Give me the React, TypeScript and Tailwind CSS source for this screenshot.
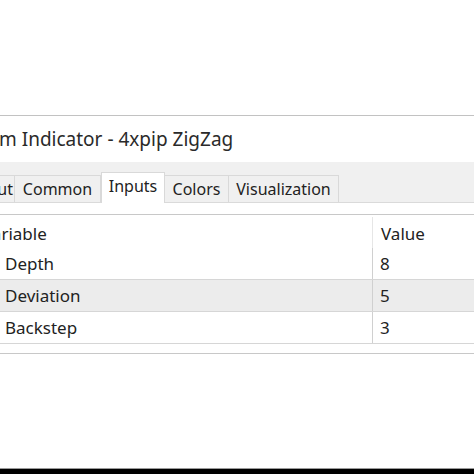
import React from "react";

const font = { fontFamily: '"Noto Sans", "Open Sans", Arial, sans-serif' };

export default function App() {
  const rows = [
    { name: "Depth", value: "8", bg: "bg-white" },
    { name: "Deviation", value: "5", bg: "bg-[#ececec]" },
    { name: "Backstep", value: "3", bg: "bg-white" },
  ];
  return (
    <div className="w-[474px] h-[474px] bg-white overflow-hidden flex flex-col text-[#222]" style={font}>
      <div className="h-[115px] shrink-0" />
      <div className="h-px bg-[#c2c2c2] shrink-0" />
      <div className="h-[46px] shrink-0 flex items-center">
        <span className="text-[19px] leading-none whitespace-nowrap -ml-[1px] text-[#2a2a2a]">m Indicator - 4xpip ZigZag</span>
      </div>
      <div className="h-[41px] shrink-0 bg-[#f0f0f0] flex items-end border-b border-[#dadada]">
        <div className="h-[27px] w-[15px] border-r border-t border-[#d9d9d9] overflow-hidden flex items-center justify-end pr-[1px]">
          <span className="text-[16px] leading-none whitespace-nowrap">ut</span>
        </div>
        <div className="h-[27px] w-[86px] border-r border-t border-[#d9d9d9] flex items-center justify-center">
          <span className="text-[16px] leading-none">Common</span>
        </div>
        <div className="h-[31px] w-[64px] bg-white border-x border-t border-[#d9d9d9] -mb-px flex items-start justify-center pt-[5px]">
          <span className="text-[16px] leading-none">Inputs</span>
        </div>
        <div className="h-[27px] w-[64px] border-r border-t border-[#d9d9d9] flex items-center justify-center">
          <span className="text-[16px] leading-none">Colors</span>
        </div>
        <div className="h-[27px] w-[110px] border-r border-t border-[#d9d9d9] flex items-center justify-center">
          <span className="text-[16px] leading-none">Visualization</span>
        </div>
      </div>
      <div className="h-[11px] shrink-0" />
      <div className="h-px bg-[#c8c8c8] shrink-0" />
      <div className="flex flex-col shrink-0">
        <div className="h-[33px] flex">
          <div className="w-[372px] flex items-center overflow-hidden pt-[3px]">
            <span className="text-[17px] leading-none -ml-[18px] whitespace-nowrap">Variable</span>
          </div>
          <div className="w-px bg-[#e6e6e6] mt-[2px]" />
          <div className="flex-1 flex items-center pl-[8px] pt-[3px]">
            <span className="text-[17px] leading-none">Value</span>
          </div>
        </div>
        {rows.map((r) => (
          <div key={r.name} className={`h-[32px] flex border-b border-[#d6d6d6] ${r.bg}`}>
            <div className="w-[372px] flex items-center pl-[5px]">
              <span className="text-[17px] leading-none">{r.name}</span>
            </div>
            <div className="w-px bg-[#d0d0d0]" />
            <div className="flex-1 flex items-center pl-[7px]">
              <span className="text-[17px] leading-none">{r.value}</span>
            </div>
          </div>
        ))}
      </div>
      <div className="h-[9px] shrink-0" />
      <div className="h-px bg-[#c8c8c8] shrink-0" />
      <div className="flex-1" />
      <div className="h-px bg-[#9a9a9a] shrink-0" />
      <div className="h-[5px] bg-black shrink-0" />
    </div>
  );
}
